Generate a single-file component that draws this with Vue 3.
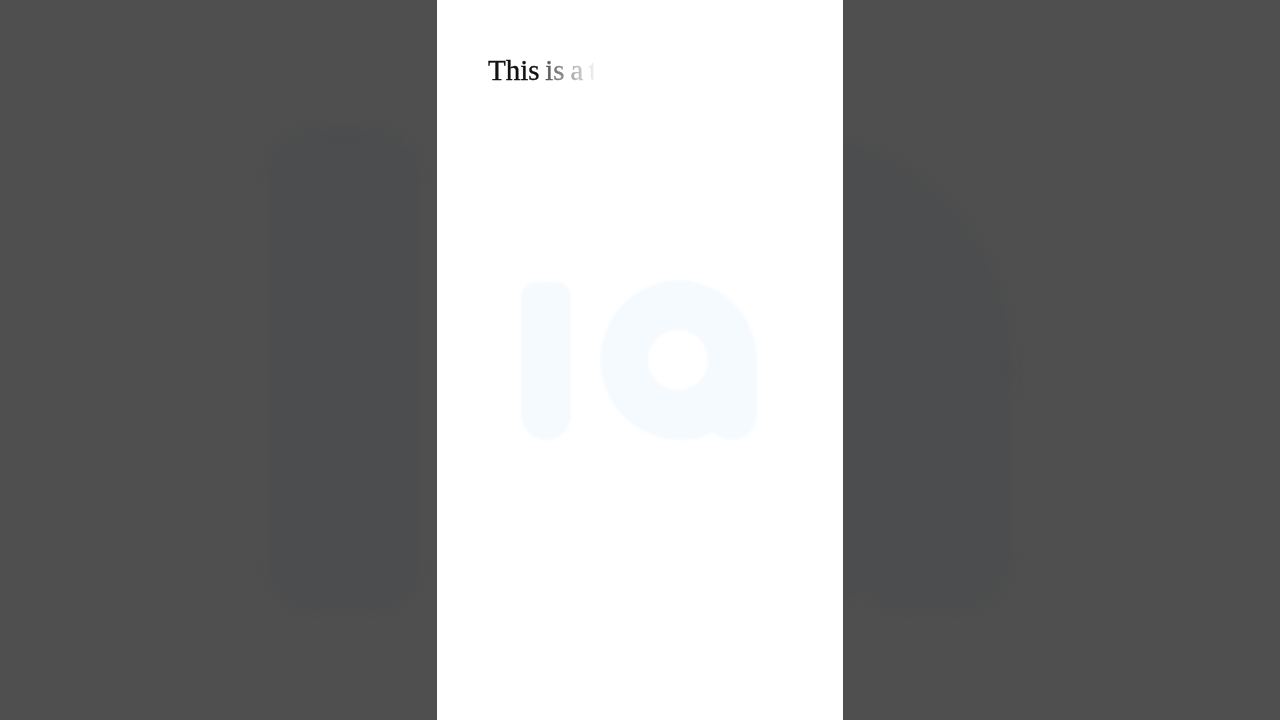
<template>
  <div class="stage">
    <!-- big blurred copy of the logo behind the video -->
    <svg class="ghost" viewBox="0 0 1280 720" aria-hidden="true">
      <rect x="268" y="130" width="152" height="480" rx="50" />
      <circle cx="772" cy="370" r="240" />
      <rect x="850" y="340" width="162" height="270" rx="60" />
    </svg>

    <div class="panel">
      <div class="typed">This is a t</div>
      <svg class="logo" width="260" height="180" viewBox="0 0 260 180" aria-hidden="true">
        <path d="M26 12h20a15 15 0 0 1 15 15v118a25 25 0 0 1-50 0V27a15 15 0 0 1 15-15z" />
        <path fill-rule="evenodd" d="M168 10a80 80 0 0 1 79 80v55a25 25 0 0 1-25 25 25 25 0 0 1-18-7.500A80 80 0 1 1 168 10zm0 50a30 30 0 1 0 0 60 30 30 0 0 0 0-60z" />
      </svg>
    </div>
  </div>
</template>

<script setup>
</script>

<style>
html, body { margin: 0; background: #4f4f4f; }
</style>

<style scoped>
.stage {
  position: relative; width: 1280px; height: 720px; overflow: hidden;
  background: #4f4f4f; display: flex; justify-content: center;
}

.ghost { position: absolute; left: 0; top: 0; width: 1280px; height: 720px; fill: #4c4d4e; filter: blur(4px); }

.panel {
  position: relative; width: 406px; height: 720px; box-sizing: border-box;
  background: #fff; padding: 50px 0 0 51px;
}

.typed {
  width: fit-content; height: 40px; line-height: 40px; white-space: nowrap;
  font-family: "Liberation Serif", serif; font-size: 29px; color: #111;
  word-spacing: -1.5px; -webkit-text-stroke: .35px #111; filter: blur(.3px);
  -webkit-mask-image: linear-gradient(to right, #000 50px, rgba(0, 0, 0, .65) 62px, rgba(0, 0, 0, .25) 92px, rgba(0, 0, 0, .08) 105px, transparent 106px);
  mask-image: linear-gradient(to right, #000 50px, rgba(0, 0, 0, .65) 62px, rgba(0, 0, 0, .25) 92px, rgba(0, 0, 0, .08) 105px, transparent 106px);
}

.logo { display: block; margin: 180px 0 0 22px; fill: #f5faff; filter: blur(1px); }
</style>
